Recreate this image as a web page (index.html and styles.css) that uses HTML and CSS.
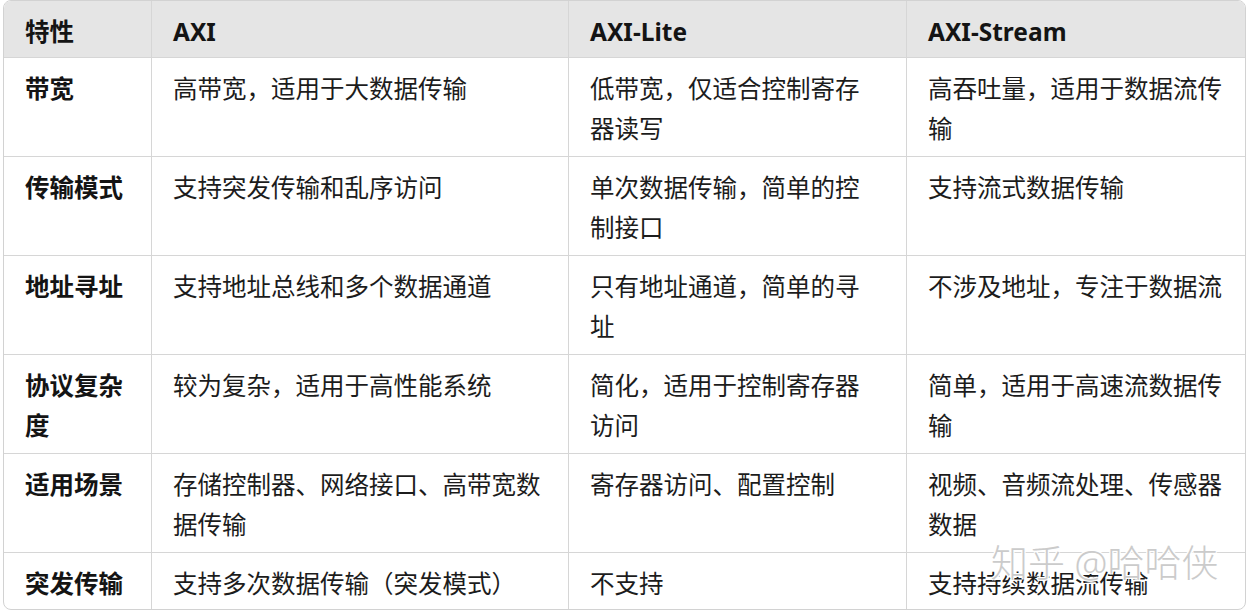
FILE: index.html
```html
<!DOCTYPE html>
<html lang="zh-CN">
<head>
<meta charset="utf-8">
<title>AXI 对比</title>
<link rel="stylesheet" href="styles.css">
</head>
<body>
<div class="frame">
  <div class="grid">
    <div class="cell head">特性</div>
    <div class="cell head">AXI</div>
    <div class="cell head">AXI-Lite</div>
    <div class="cell head last">AXI-Stream</div>

    <div class="cell key">带宽</div>
    <div class="cell">高带宽，适用于大数据传输</div>
    <div class="cell c3">低带宽，仅适合控制寄存器读写</div>
    <div class="cell last">高吞吐量，适用于数据流传输</div>

    <div class="cell key">传输模式</div>
    <div class="cell">支持突发传输和乱序访问</div>
    <div class="cell c3">单次数据传输，简单的控制接口</div>
    <div class="cell last">支持流式数据传输</div>

    <div class="cell key">地址寻址</div>
    <div class="cell">支持地址总线和多个数据通道</div>
    <div class="cell c3">只有地址通道，简单的寻址</div>
    <div class="cell last">不涉及地址，专注于数据流</div>

    <div class="cell key">协议复杂度</div>
    <div class="cell">较为复杂，适用于高性能系统</div>
    <div class="cell c3">简化，适用于控制寄存器访问</div>
    <div class="cell last">简单，适用于高速流数据传输</div>

    <div class="cell key">适用场景</div>
    <div class="cell">存储控制器、网络接口、高带宽数据传输</div>
    <div class="cell c3">寄存器访问、配置控制</div>
    <div class="cell last">视频、音频流处理、传感器数据</div>

    <div class="cell key bottom">突发传输</div>
    <div class="cell bottom">支持多次数据传输（突发模式）</div>
    <div class="cell c3 bottom">不支持</div>
    <div class="cell last bottom">支持持续数据流传输</div>
  </div>
  <div class="watermark">知乎 @哈哈侠</div>
</div>
</body>
</html>
```
FILE: styles.css
```css
html, body {
  margin: 0;
  padding: 0;
  background: #ffffff;
}

body {
  font-family: "Noto Sans", "Noto Sans CJK SC", sans-serif;
  color: #1c1c1c;
}

.frame {
  position: relative;
  margin-left: 3px;
  width: 1241px;
  border: 1px solid #d2d2d2;
  border-radius: 8px;
  overflow: hidden;
}

.grid {
  display: grid;
  grid-template-columns: 148px 417px 338px 338px;
}

.cell {
  box-sizing: border-box;
  padding: 11px 22px 7px 21px;
  font-size: 24.5px;
  line-height: 40px;
  border-right: 1px solid #d6d6d6;
  border-bottom: 1px solid #d6d6d6;
}

.cell.c3 {
  padding-right: 26px;
}

.cell.last {
  border-right: none;
  padding-right: 16px;
}

.cell.bottom {
  border-bottom: none;
  padding-bottom: 5px;
}

.head {
  background: #e5e5e5;
  font-weight: 700;
  color: #141414;
  padding-top: 11px;
  padding-bottom: 5px;
}

.key {
  font-weight: 700;
  color: #141414;
}

.watermark {
  position: absolute;
  left: 987px;
  top: 536px;
  font-size: 37px;
  line-height: 52px;
  font-weight: 300;
  color: #cbcbcb;
  white-space: nowrap;
  text-shadow: 1px 1px 0 #fff, -1px -1px 0 #fff, 1px -1px 0 #fff, -1px 1px 0 #fff;
  pointer-events: none;
}
```
